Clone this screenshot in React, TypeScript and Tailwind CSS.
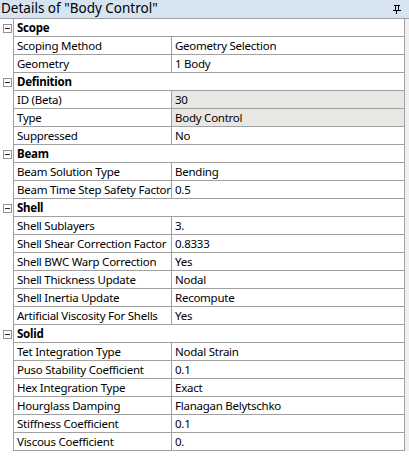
import React from 'react'

type Row =
  | { kind: 'group'; label: string }
  | { kind: 'prop'; label: string; value: string; readOnly?: boolean }

const ROWS: Row[] = [
  { kind: 'group', label: 'Scope' },
  { kind: 'prop', label: 'Scoping Method', value: 'Geometry Selection' },
  { kind: 'prop', label: 'Geometry', value: '1 Body' },
  { kind: 'group', label: 'Definition' },
  { kind: 'prop', label: 'ID (Beta)', value: '30', readOnly: true },
  { kind: 'prop', label: 'Type', value: 'Body Control', readOnly: true },
  { kind: 'prop', label: 'Suppressed', value: 'No' },
  { kind: 'group', label: 'Beam' },
  { kind: 'prop', label: 'Beam Solution Type', value: 'Bending' },
  { kind: 'prop', label: 'Beam Time Step Safety Factor', value: '0.5' },
  { kind: 'group', label: 'Shell' },
  { kind: 'prop', label: 'Shell Sublayers', value: '3.' },
  { kind: 'prop', label: 'Shell Shear Correction Factor', value: '0.8333' },
  { kind: 'prop', label: 'Shell BWC Warp Correction', value: 'Yes' },
  { kind: 'prop', label: 'Shell Thickness Update', value: 'Nodal' },
  { kind: 'prop', label: 'Shell Inertia Update', value: 'Recompute' },
  { kind: 'prop', label: 'Artificial Viscosity For Shells', value: 'Yes' },
  { kind: 'group', label: 'Solid' },
  { kind: 'prop', label: 'Tet Integration Type', value: 'Nodal Strain' },
  { kind: 'prop', label: 'Puso Stability Coefficient', value: '0.1' },
  { kind: 'prop', label: 'Hex Integration Type', value: 'Exact' },
  { kind: 'prop', label: 'Hourglass Damping', value: 'Flanagan Belytschko' },
  { kind: 'prop', label: 'Stiffness Coefficient', value: '0.1' },
  { kind: 'prop', label: 'Viscous Coefficient', value: '0.' },
]

function CollapseBox() {
  return (
    <div className="w-[9px] h-[9px] border border-[#919191] bg-white flex items-center justify-center">
      <div className="w-[5px] h-px bg-[#222]" />
    </div>
  )
}

function PinIcon() {
  return (
    <svg width="8" height="9" viewBox="0 0 8 9" className="block">
      <rect x="1" y="0" width="6" height="1" fill="#000" />
      <rect x="2" y="1" width="1" height="4" fill="#000" />
      <rect x="5" y="1" width="1" height="4" fill="#000" />
      <rect x="0" y="5" width="8" height="1" fill="#000" />
      <rect x="3" y="6" width="1" height="3" fill="#000" />
    </svg>
  )
}

export default function App() {
  return (
    <div
      className="w-[409px] h-[461px] bg-white text-[11.5px] tracking-[-0.25px] text-black overflow-hidden"
      style={{ fontFamily: '"Segoe UI", "Noto Sans", sans-serif' }}
    >
      <div className="h-[19px] bg-[#d6e4f2] border-b border-[#a0a0a0] flex items-center justify-between pl-[1px] pr-[8px]">
        <span className="leading-none text-[13.5px] tracking-normal">Details of "Body Control"</span>
        <PinIcon />
      </div>
      <div className="flex">
        <div className="w-[405px] flex flex-col">
          {ROWS.map((r, i) =>
            r.kind === 'group' ? (
              <div key={i} className="flex h-[18px]">
                <div className="w-[13px] flex items-center justify-center pl-[1px]">
                  <CollapseBox />
                </div>
                <div className="flex-1 border-l border-r border-b border-[#a0a0a0] flex items-center pl-[3px] font-bold leading-none">
                  {r.label}
                </div>
              </div>
            ) : (
              <div key={i} className="flex h-[18px]">
                <div className="w-[13px]" />
                <div className="w-[158px] border-l border-b border-[#a0a0a0] flex items-center pl-[3px] leading-none whitespace-nowrap">
                  {r.label}
                </div>
                <div
                  className={`flex-1 border-l border-r border-b border-[#a0a0a0] flex items-center pl-[3px] leading-none whitespace-nowrap ${
                    r.readOnly ? 'bg-[#e8e7e3]' : ''
                  }`}
                >
                  {r.value}
                </div>
              </div>
            )
          )}
        </div>
        <div className="flex-1 bg-[#f0f0f0]" />
      </div>
    </div>
  )
}
